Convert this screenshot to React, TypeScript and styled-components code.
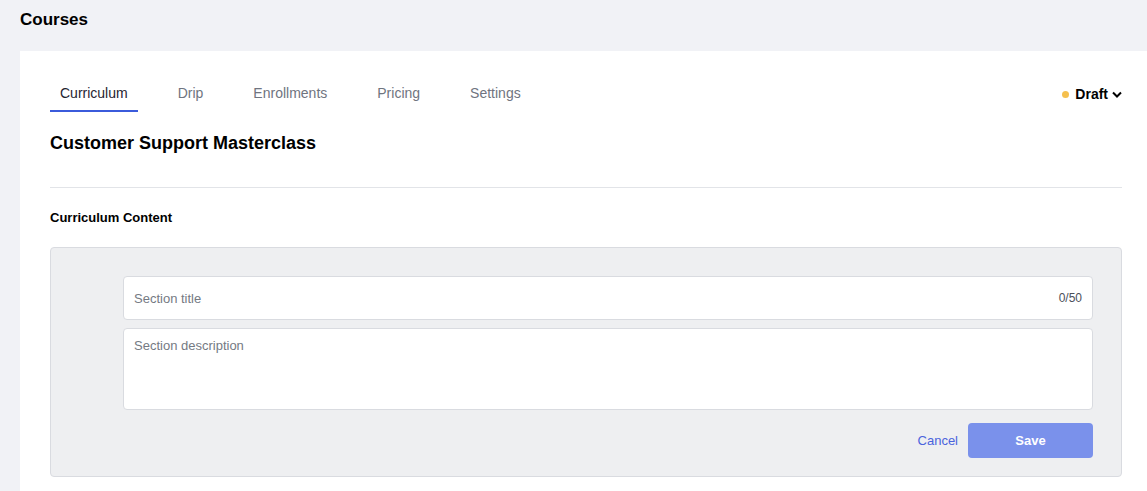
import React from 'react'
import styled, { createGlobalStyle } from 'styled-components'

const GlobalStyle = createGlobalStyle`
  body {
    margin: 0;
    background: #f1f2f6;
    font-family: 'Liberation Sans', Arial, sans-serif;
  }
`

const Page = styled.div`
  height: 491px;
  overflow: hidden;
  background: #f1f2f6;
`

const PageTitle = styled.h1`
  margin: 0;
  padding: 10px 20px 0;
  height: 51px;
  box-sizing: border-box;
  font-size: 17px;
  line-height: 20px;
  font-weight: 700;
  color: #000;
`

const Card = styled.div`
  margin-left: 20px;
  background: #fff;
  padding: 24px 25px 20px 30px;
`

const TopRow = styled.div`
  display: flex;
  align-items: flex-start;
  justify-content: space-between;
`

const Tabs = styled.div`
  display: flex;
  gap: 30px;
`

const Tab = styled.div<{ $active?: boolean }>`
  padding: 10px 10px 9px;
  font-size: 14px;
  line-height: 16px;
  color: ${(p) => (p.$active ? '#1f2430' : '#6f7480')};
  border-bottom: 2px solid ${(p) => (p.$active ? '#3b5bdb' : 'transparent')};
  cursor: pointer;
`

const Status = styled.div`
  display: flex;
  align-items: center;
  gap: 4px;
  padding-top: 11px;
  font-size: 14px;
  line-height: 16px;
  font-weight: 700;
  color: #000;
`

const Dot = styled.span`
  width: 7px;
  height: 7px;
  border-radius: 50%;
  background: #f5c04e;
  margin-right: 2px;
`

const CourseTitle = styled.h2`
  margin: 20px 0 0;
  font-size: 18px;
  line-height: 22px;
  font-weight: 700;
  color: #000;
`

const Divider = styled.hr`
  border: none;
  border-top: 1px solid #e2e4e8;
  margin: 33px 0 0;
`

const SectionLabel = styled.h3`
  margin: 22px 0 0;
  font-size: 13px;
  line-height: 16px;
  font-weight: 700;
  color: #000;
`

const EditorBox = styled.div`
  margin-top: 21px;
  background: #eeeff1;
  border: 1px solid #d9dbe0;
  border-radius: 4px;
  padding: 28px 28px 18px 72px;
  display: flex;
  flex-direction: column;
  gap: 8px;
`

const Field = styled.div<{ $tall?: boolean }>`
  display: flex;
  justify-content: space-between;
  align-items: ${(p) => (p.$tall ? 'flex-start' : 'center')};
  height: ${(p) => (p.$tall ? '82px' : '44px')};
  box-sizing: border-box;
  padding: ${(p) => (p.$tall ? '9px 10px' : '0 10px')};
  background: #fff;
  border: 1px solid #d9dbe0;
  border-radius: 4px;
  font-size: 13px;
  line-height: 15px;
  color: #757a83;
`

const Counter = styled.span`
  font-size: 12px;
  color: #4b505a;
`

const Actions = styled.div`
  display: flex;
  justify-content: flex-end;
  align-items: center;
  gap: 10px;
  margin-top: 5px;
`

const CancelLink = styled.span`
  font-size: 13px;
  color: #4a63dd;
  cursor: pointer;
`

const SaveButton = styled.button`
  width: 125px;
  height: 35px;
  border: none;
  border-radius: 4px;
  background: #7a91eb;
  color: #fff;
  font-family: inherit;
  font-size: 13px;
  font-weight: 700;
`

const tabs = ['Curriculum', 'Drip', 'Enrollments', 'Pricing', 'Settings']

export default function App() {
  return (
    <Page>
      <GlobalStyle />
      <PageTitle>Courses</PageTitle>
      <Card>
        <TopRow>
          <Tabs>
            {tabs.map((t, i) => (
              <Tab key={t} $active={i === 0}>
                {t}
              </Tab>
            ))}
          </Tabs>
          <Status>
            <Dot />
            Draft
            <svg width="10" height="10" viewBox="0 0 10 10">
              <path d="M1 3.5 L5 7.5 L9 3.5" fill="none" stroke="#000" strokeWidth="2" />
            </svg>
          </Status>
        </TopRow>
        <CourseTitle>Customer Support Masterclass</CourseTitle>
        <Divider />
        <SectionLabel>Curriculum Content</SectionLabel>
        <EditorBox>
          <Field>
            Section title
            <Counter>0/50</Counter>
          </Field>
          <Field $tall>Section description</Field>
          <Actions>
            <CancelLink>Cancel</CancelLink>
            <SaveButton>Save</SaveButton>
          </Actions>
        </EditorBox>
      </Card>
    </Page>
  )
}
